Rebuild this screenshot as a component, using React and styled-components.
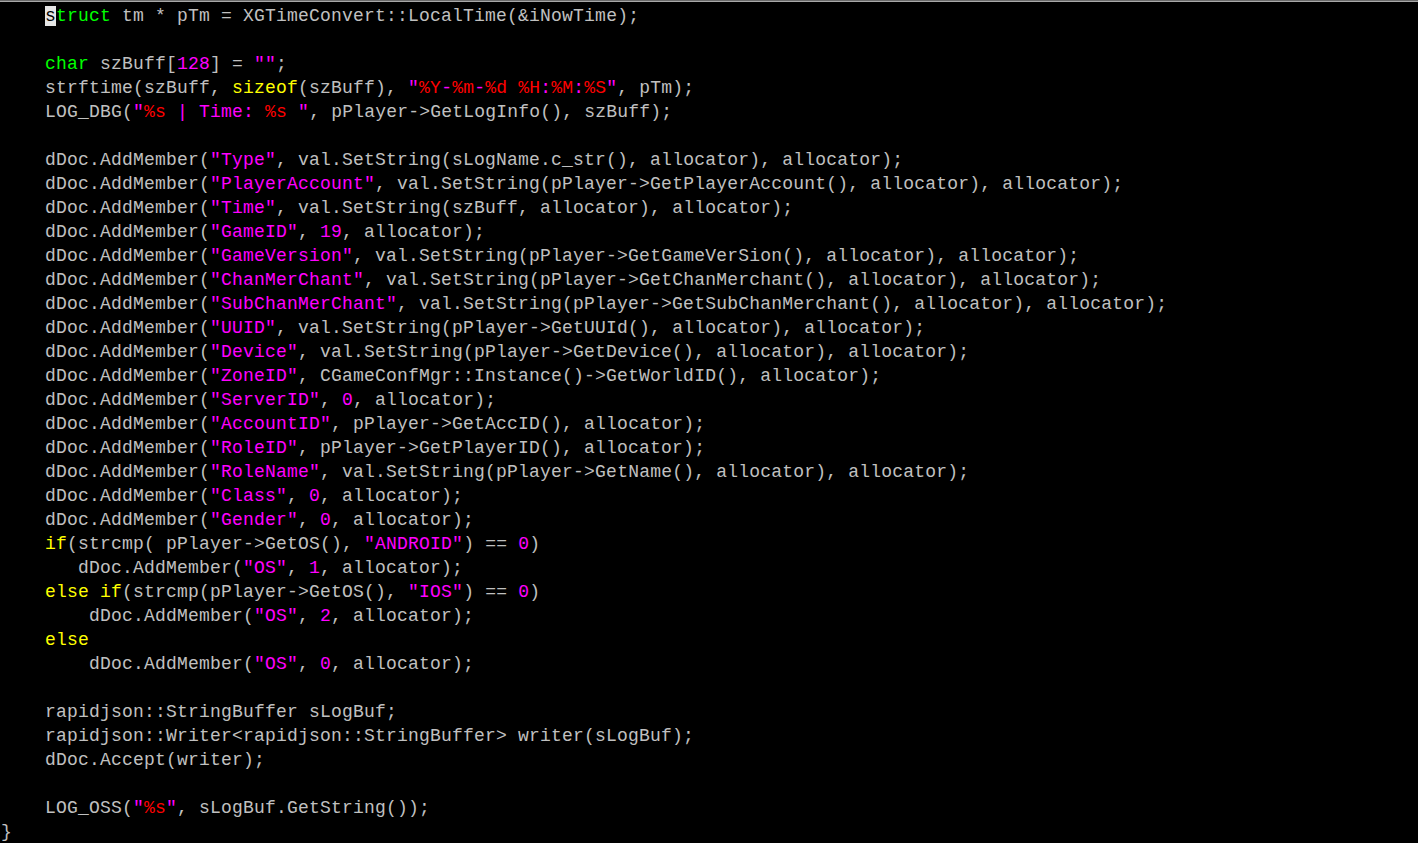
import React from "react";
import styled, { createGlobalStyle } from "styled-components";

const GlobalStyle = createGlobalStyle`
  html, body {
    margin: 0;
    padding: 0;
    background: #000;
  }
  #root {
    height: 100vh;
  }
`;

const Terminal = styled.div`
  width: 100%;
  height: 100vh;
  background: #000;
  overflow: hidden;
  display: flex;
  flex-direction: column;
`;

const TopRule = styled.div`
  height: 2px;
  flex: none;
  background: linear-gradient(to bottom, #6a6a6a 0, #6a6a6a 1px, #a8a8a8 1px, #a8a8a8 2px);
`;

const Code = styled.pre`
  margin: 0;
  padding: 2px 0 0 1px;
  font-family: "Liberation Mono", "DejaVu Sans Mono", monospace;
  font-size: 18px;
  letter-spacing: 0.2px;
  color: #c0c0c0;
`;

const Line = styled.div`
  height: 24px;
  line-height: 24px;
  white-space: pre;
`;

const palette = {
  type: "#00ff00",
  stmt: "#ffff00",
  str: "#ff00ff",
  num: "#ff00ff",
  fmt: "#ff0000",
};

const Tok = styled.span`
  color: ${(p) => palette[p.$kind] || "inherit"};
`;

const Cursor = styled.span`
  background: #e6e6e6;
  color: #000;
`;

const LINES = [
  "    struct tm * pTm = XGTimeConvert::LocalTime(&iNowTime);",
  "",
  '    char szBuff[128] = "";',
  '    strftime(szBuff, sizeof(szBuff), "%Y-%m-%d %H:%M:%S", pTm);',
  '    LOG_DBG("%s | Time: %s ", pPlayer->GetLogInfo(), szBuff);',
  "",
  '    dDoc.AddMember("Type", val.SetString(sLogName.c_str(), allocator), allocator);',
  '    dDoc.AddMember("PlayerAccount", val.SetString(pPlayer->GetPlayerAccount(), allocator), allocator);',
  '    dDoc.AddMember("Time", val.SetString(szBuff, allocator), allocator);',
  '    dDoc.AddMember("GameID", 19, allocator);',
  '    dDoc.AddMember("GameVersion", val.SetString(pPlayer->GetGameVerSion(), allocator), allocator);',
  '    dDoc.AddMember("ChanMerChant", val.SetString(pPlayer->GetChanMerchant(), allocator), allocator);',
  '    dDoc.AddMember("SubChanMerChant", val.SetString(pPlayer->GetSubChanMerchant(), allocator), allocator);',
  '    dDoc.AddMember("UUID", val.SetString(pPlayer->GetUUId(), allocator), allocator);',
  '    dDoc.AddMember("Device", val.SetString(pPlayer->GetDevice(), allocator), allocator);',
  '    dDoc.AddMember("ZoneID", CGameConfMgr::Instance()->GetWorldID(), allocator);',
  '    dDoc.AddMember("ServerID", 0, allocator);',
  '    dDoc.AddMember("AccountID", pPlayer->GetAccID(), allocator);',
  '    dDoc.AddMember("RoleID", pPlayer->GetPlayerID(), allocator);',
  '    dDoc.AddMember("RoleName", val.SetString(pPlayer->GetName(), allocator), allocator);',
  '    dDoc.AddMember("Class", 0, allocator);',
  '    dDoc.AddMember("Gender", 0, allocator);',
  '    if(strcmp( pPlayer->GetOS(), "ANDROID") == 0)',
  '       dDoc.AddMember("OS", 1, allocator);',
  '    else if(strcmp(pPlayer->GetOS(), "IOS") == 0)',
  '        dDoc.AddMember("OS", 2, allocator);',
  "    else",
  '        dDoc.AddMember("OS", 0, allocator);',
  "",
  "    rapidjson::StringBuffer sLogBuf;",
  "    rapidjson::Writer<rapidjson::StringBuffer> writer(sLogBuf);",
  "    dDoc.Accept(writer);",
  "",
  '    LOG_OSS("%s", sLogBuf.GetString());',
  "}",
];

const TOKEN_RE = /("(?:[^"\\]|\\.)*")|\b(struct|char)\b|\b(sizeof|if|else)\b|\b(\d+)\b/g;

function renderString(str, keyBase) {
  return str.split(/(%[a-zA-Z])/).filter(Boolean).map((part, i) =>
    /^%[a-zA-Z]$/.test(part) ? (
      <Tok key={`${keyBase}-${i}`} $kind="fmt">{part}</Tok>
    ) : (
      <Tok key={`${keyBase}-${i}`} $kind="str">{part}</Tok>
    )
  );
}

function tokenize(line) {
  const out = [];
  let last = 0;
  let m;
  let k = 0;
  TOKEN_RE.lastIndex = 0;
  while ((m = TOKEN_RE.exec(line))) {
    if (m.index > last) out.push(line.slice(last, m.index));
    if (m[1]) out.push(...renderString(m[1], `s${k}`));
    else if (m[2]) out.push(<Tok key={`t${k}`} $kind="type">{m[2]}</Tok>);
    else if (m[3]) out.push(<Tok key={`k${k}`} $kind="stmt">{m[3]}</Tok>);
    else if (m[4]) out.push(<Tok key={`n${k}`} $kind="num">{m[4]}</Tok>);
    last = m.index + m[0].length;
    k++;
  }
  if (last < line.length) out.push(line.slice(last));
  return out;
}

function FirstLine() {
  return (
    <Line>
      {"    "}
      <Cursor>s</Cursor>
      <Tok $kind="type">truct</Tok>
      {" tm * pTm = XGTimeConvert::LocalTime(&iNowTime);"}
    </Line>
  );
}

export default function App() {
  return (
    <>
      <GlobalStyle />
      <Terminal>
        <TopRule />
        <Code>
          <FirstLine />
          {LINES.slice(1).map((line, i) => (
            <Line key={i}>{line === "" ? " " : tokenize(line)}</Line>
          ))}
        </Code>
      </Terminal>
    </>
  );
}
